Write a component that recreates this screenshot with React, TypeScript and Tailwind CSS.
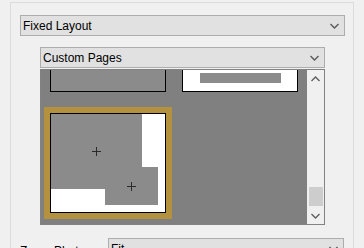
import React from 'react';

const Chevron: React.FC<{ up?: boolean; className?: string }> = ({ up, className }) => (
    <svg width="9" height="6" viewBox="0 0 9 6" className={className}>
        <path
            d={up ? 'M0.5 5 L4.5 1 L8.5 5' : 'M0.5 1 L4.5 5 L8.5 1'}
            fill="none"
            stroke="currentColor"
            strokeWidth="1.4"
        />
    </svg>
);

const Cross: React.FC<{ className?: string }> = ({ className }) => (
    <svg width="9" height="9" viewBox="0 0 9 9" className={className}>
        <path d="M4.5 0 V9 M0 4.5 H9" stroke="#2b2b2b" strokeWidth="1" />
    </svg>
);

const Select: React.FC<{ label: string; className?: string }> = ({ label, className }) => (
    <div
        className={`flex items-center justify-between h-[21px] border border-[#adadad] bg-[#e1e1e1] pl-[2px] pr-[5px] text-[12px] text-black ${className ?? ''}`}
    >
        <span className="leading-none">{label}</span>
        <Chevron className="text-[#5a5a5a]" />
    </div>
);

const PageCell: React.FC<{ selected?: boolean; children?: React.ReactNode; className?: string }> = ({
    selected,
    children,
    className,
}) => (
    <div className={`p-[6px] ${selected ? 'bg-[#b3913f]' : ''}`}>
        <div className={`relative w-[116px] h-[100px] border border-black ${className ?? 'bg-white'}`}>
            {children}
        </div>
    </div>
);

export default function App() {
    return (
        <div
            className="w-[364px] h-[248px] overflow-hidden bg-[#f0f0f0] pl-[10px] pt-[2px]"
            style={{ fontFamily: '"Segoe UI", "Liberation Sans", Arial, sans-serif' }}
        >
            <div className="w-[344px] h-[260px] border-l border-t border-r border-[#dcdcdc] pl-[9px] pr-[9px] pt-[12px]">
                <Select label="Fixed Layout" className="w-[325px]" />

                <div className="ml-[20px] mt-[11px] w-[285px]">
                    <Select label="Custom Pages" />

                    {/* page list */}
                    <div className="mt-px flex h-[156px] border border-[#828282] bg-[#808080]">
                        <div className="flex-1 overflow-hidden">
                            <div className="mt-[-84px] ml-[3px] grid grid-cols-[128px_128px] gap-x-[4px] gap-y-[9px]">
                                <PageCell className="bg-[#8b8b8b]" />
                                <PageCell>
                                    <div className="absolute left-[17px] bottom-[8px] w-[81px] h-[10px] bg-[#8b8b8b]" />
                                </PageCell>
                                <PageCell selected>
                                    <div className="absolute left-0 top-0 w-[91px] h-[75px] bg-[#8b8b8b] flex items-center justify-center">
                                        <Cross />
                                    </div>
                                    <div className="absolute left-[54px] top-[53px] w-[53px] h-[38px] bg-[#8b8b8b] flex items-center justify-center">
                                        <Cross />
                                    </div>
                                </PageCell>
                            </div>
                        </div>

                        {/* scrollbar */}
                        <div className="w-[17px] bg-[#f0f0f0] flex flex-col items-center">
                            <div className="h-[17px] flex items-center justify-center">
                                <Chevron up className="text-[#606060]" />
                            </div>
                            <div className="flex-1 w-full flex flex-col justify-end items-center pb-[1px]">
                                <div className="w-[14px] h-[19px] bg-[#cdcdcd]" />
                            </div>
                            <div className="h-[17px] flex items-center justify-center">
                                <Chevron className="text-[#606060]" />
                            </div>
                        </div>
                    </div>
                </div>

                <div className="mt-[13px] flex items-start">
                    <span className="w-[88px] pt-[7px] text-[12px] leading-none text-black">Zoom Photos To:</span>
                    <Select label="Fit" className="w-[236px]" />
                </div>
            </div>
        </div>
    );
}
